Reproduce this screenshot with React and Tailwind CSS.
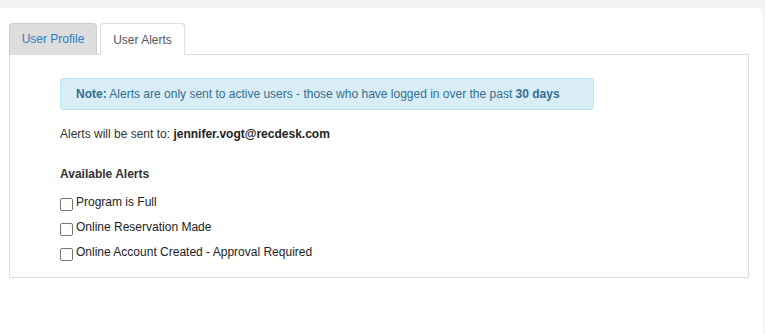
import React from 'react';

const alerts = ['Program is Full', 'Online Reservation Made', 'Online Account Created - Approval Required'];

const App = () => {
  return (
    <div className="min-h-[334px] bg-[#f3f3f3] pt-[8px] pr-[2px] text-[12px] text-[#333] font-['Liberation_Sans',Arial,sans-serif]">
      <div className="min-h-[326px] bg-white rounded-tr-[5px] pt-[15px] pl-[9px] pr-[14px]">
        {/* Tabs */}
        <div className="flex items-end gap-[3px]">
          <div className="h-[31px] w-[88px] flex items-center justify-center bg-[#dddddd] border border-[#cccccc] border-b-0 rounded-t-[4px] text-[#2a7fc9]">
            User Profile
          </div>
          <div className="h-[32px] w-[85px] flex items-center justify-center bg-white border border-[#dddddd] border-b-0 rounded-t-[4px] -mb-px relative z-10 text-[#555]">
            User Alerts
          </div>
        </div>

        {/* Panel */}
        <div className="border border-[#dddddd] pt-[23px] pb-[16px] pl-[50px]">
          <div className="w-[534px] h-[32px] flex items-center px-[15px] bg-[#d9edf7] border border-[#bce8f1] rounded-[3px] text-[#31708f]">
            <span>
              <b>Note:</b> Alerts are only sent to active users - those who have logged in over the past <b>30 days</b>
            </span>
          </div>

          <div className="mt-[16px] leading-[17px]">
            Alerts will be sent to: <b className="text-[#222]">jennifer.vogt@recdesk.com</b>
          </div>

          <div className="mt-[23px] font-bold leading-[17px]">Available Alerts</div>

          <div className="mt-[11px] flex flex-col gap-[8px]">
            {alerts.map((a) => (
              <label key={a} className="flex items-start h-[17px] leading-[17px] text-[#222]">
                <span className="mt-[4px] mr-[3px] w-[13px] h-[13px] border border-[#777] rounded-[2px] bg-white" />
                {a}
              </label>
            ))}
          </div>
        </div>
      </div>
    </div>
  );
};

export default App;
